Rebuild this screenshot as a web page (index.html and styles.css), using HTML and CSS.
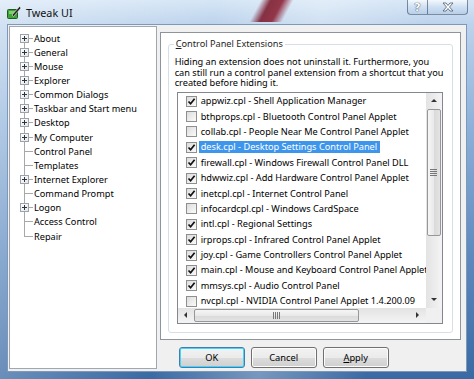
FILE: index.html
```html
<!DOCTYPE html>
<html>
  <head>
    <title>Tweak UI</title>
    <link rel="stylesheet" href="styles.css">
  </head>
  <body>
    <div class="window">
      <div class="titlebar">
        <svg class="app-icon" width="16" height="16" viewBox="0 0 16 16">
          <rect x="1.5" y="5.5" width="10" height="9" rx="1" fill="#3fa33a" stroke="#1d5e1e"/>
          <rect x="3" y="7" width="7" height="3" fill="#7fd06a"/>
          <path d="M6 11 L13.5 2.5 L15 4 L7.5 12.5 Z" fill="#222" stroke="#eee" stroke-width="0.6"/>
        </svg>
        <span class="title">Tweak UI</span>
        <div class="caption-buttons">
          <div class="cap-btn help">?</div>
          <div class="cap-btn close">
            <svg width="12" height="10" viewBox="0 0 12 10">
              <path d="M1 1 L4 1 L6 3.5 L8 1 L11 1 L7.5 5 L11 9 L8 9 L6 6.5 L4 9 L1 9 L4.5 5 Z" fill="#fff" stroke="#4a5a70" stroke-width="0.8"/>
            </svg>
          </div>
        </div>
      </div>

      <div class="client">
        <div class="tree">
          <div class="node first"><span class="twig"><span class="plus"></span></span><span class="label">About</span></div>
          <div class="node"><span class="twig"><span class="plus"></span></span><span class="label">General</span></div>
          <div class="node"><span class="twig"><span class="plus"></span></span><span class="label">Mouse</span></div>
          <div class="node"><span class="twig"><span class="plus"></span></span><span class="label">Explorer</span></div>
          <div class="node"><span class="twig"><span class="plus"></span></span><span class="label">Common Dialogs</span></div>
          <div class="node"><span class="twig"><span class="plus"></span></span><span class="label">Taskbar and Start menu</span></div>
          <div class="node"><span class="twig"><span class="plus"></span></span><span class="label">Desktop</span></div>
          <div class="node"><span class="twig"><span class="plus"></span></span><span class="label">My Computer</span></div>
          <div class="node"><span class="twig"></span><span class="label">Control Panel</span></div>
          <div class="node"><span class="twig"></span><span class="label">Templates</span></div>
          <div class="node"><span class="twig"><span class="plus"></span></span><span class="label">Internet Explorer</span></div>
          <div class="node"><span class="twig"></span><span class="label">Command Prompt</span></div>
          <div class="node"><span class="twig"><span class="plus"></span></span><span class="label">Logon</span></div>
          <div class="node"><span class="twig"></span><span class="label">Access Control</span></div>
          <div class="node last"><span class="twig"></span><span class="label">Repair</span></div>
        </div>

        <div class="main">
          <div class="page">
            <fieldset class="group">
              <legend><u>C</u>ontrol Panel Extensions</legend>
              <p class="desc">Hiding an extension does not uninstall it. Furthermore, you can still run a control panel extension from a shortcut that you created before hiding it.</p>
              <div class="listbox">
                <div class="rows">
                  <div class="row"><span class="check on"></span><span class="item">appwiz.cpl - Shell Application Manager</span></div>
                  <div class="row"><span class="check"></span><span class="item">bthprops.cpl - Bluetooth Control Panel Applet</span></div>
                  <div class="row"><span class="check"></span><span class="item">collab.cpl - People Near Me Control Panel Applet</span></div>
                  <div class="row"><span class="check on"></span><span class="item selected">desk.cpl - Desktop Settings Control Panel</span></div>
                  <div class="row"><span class="check on"></span><span class="item">firewall.cpl - Windows Firewall Control Panel DLL</span></div>
                  <div class="row"><span class="check on"></span><span class="item">hdwwiz.cpl - Add Hardware Control Panel Applet</span></div>
                  <div class="row"><span class="check on"></span><span class="item">inetcpl.cpl - Internet Control Panel</span></div>
                  <div class="row"><span class="check"></span><span class="item">infocardcpl.cpl - Windows CardSpace</span></div>
                  <div class="row"><span class="check on"></span><span class="item">intl.cpl - Regional Settings</span></div>
                  <div class="row"><span class="check on"></span><span class="item">irprops.cpl - Infrared Control Panel Applet</span></div>
                  <div class="row"><span class="check on"></span><span class="item">joy.cpl - Game Controllers Control Panel Applet</span></div>
                  <div class="row"><span class="check on"></span><span class="item">main.cpl - Mouse and Keyboard Control Panel Applets</span></div>
                  <div class="row"><span class="check on"></span><span class="item">mmsys.cpl - Audio Control Panel</span></div>
                  <div class="row"><span class="check"></span><span class="item">nvcpl.cpl - NVIDIA Control Panel Applet 1.4.200.09</span></div>
                  <div class="row"><span class="check"></span></div>
                </div>
                <div class="vscroll">
                  <div class="arrow"><span class="tri up"></span></div>
                  <div class="thumb v"><span class="grip-v"></span></div>
                  <div class="track"></div>
                  <div class="arrow"><span class="tri down"></span></div>
                </div>
                <div class="hscroll">
                  <div class="arrow"><span class="tri left"></span></div>
                  <div class="thumb h"><span class="grip-h"></span></div>
                  <div class="track"></div>
                  <div class="arrow"><span class="tri right"></span></div>
                </div>
                <div class="corner"></div>
              </div>
            </fieldset>
          </div>

          <div class="buttons">
            <button class="btn default">OK</button>
            <button class="btn">Cancel</button>
            <button class="btn"><u>A</u>pply</button>
          </div>
        </div>
      </div>
    </div>
  </body>
</html>
```

FILE: styles.css
```css
* {
  box-sizing: border-box;
}

body {
  margin: 0;
  font-family: "Noto Sans", "Open Sans", sans-serif;
  font-size: 9.2px;
  color: #000;
}

.window {
  width: 474px;
  height: 379px;
  display: flex;
  flex-direction: column;
  padding: 0 7px 7px 7px;
  background:
    linear-gradient(118deg, rgba(125, 30, 48, 0) 25%, rgba(125, 30, 48, 0.9) 42%, rgba(140, 35, 55, 0.9) 62%, rgba(125, 30, 48, 0) 80%) 246px 0 / 48px 22px no-repeat,
    linear-gradient(100deg, rgba(255, 255, 255, 0.35) 0, rgba(255, 255, 255, 0) 40%, rgba(255, 255, 255, 0.3) 60%, rgba(255, 255, 255, 0) 80%),
    linear-gradient(to bottom, #d6e6f6 0, #bcd3ec 24px, #8fb3da 120px, #5c88bd 260px, #3a6aa3 379px);
}

/* title bar */
.titlebar {
  height: 24px;
  display: flex;
  align-items: center;
}

.app-icon {
  margin-left: -1px;
}

.title {
  margin-left: 4px;
  font-size: 10.8px;
  color: #111;
}

.caption-buttons {
  margin-left: auto;
  margin-right: -1px;
  align-self: flex-start;
  display: flex;
}

.cap-btn {
  height: 15px;
  display: flex;
  align-items: center;
  justify-content: center;
  border: 1px solid rgba(50, 70, 100, 0.6);
  border-top: none;
  background: linear-gradient(to bottom, rgba(255, 255, 255, 0.7), rgba(205, 222, 240, 0.5) 50%, rgba(170, 195, 225, 0.5));
}

.help {
  width: 21px;
  border-radius: 0 0 0 4px;
  color: #fff;
  font-family: "DejaVu Sans", sans-serif;
  font-weight: bold;
  font-size: 11px;
  text-shadow: 0 0 1px #3c4c60, 0 0 1px #3c4c60;
}

.close {
  width: 40px;
  border-left: none;
  border-radius: 0 0 4px 0;
}

/* client area */
.client {
  flex: 1;
  display: flex;
  gap: 3px;
  padding: 1px 2px 2px 1px;
  background: #f0f0f0;
  border: 1px solid #7d98b8;
}

.tree {
  width: 148px;
  padding: 4px 0 0 10px;
  background: #fff;
  border: 1px solid #a0a7b0;
}

.node {
  height: 14.15px;
  display: flex;
  align-items: center;
}

.twig {
  width: 13px;
  height: 100%;
  display: flex;
  align-items: center;
  background:
    linear-gradient(#a8a8a8, #a8a8a8) 4px 0 / 1px 100% no-repeat,
    linear-gradient(#a8a8a8, #a8a8a8) 4px 50% / 9px 1px no-repeat;
}

.node.first .twig {
  background:
    linear-gradient(#a8a8a8, #a8a8a8) 4px 100% / 1px 50% no-repeat,
    linear-gradient(#a8a8a8, #a8a8a8) 4px 50% / 9px 1px no-repeat;
}

.node.last .twig {
  background:
    linear-gradient(#a8a8a8, #a8a8a8) 4px 0 / 1px 50% no-repeat,
    linear-gradient(#a8a8a8, #a8a8a8) 4px 50% / 9px 1px no-repeat;
}

.plus {
  width: 9px;
  height: 9px;
  border: 1px solid #9aa3ad;
  background:
    linear-gradient(#333, #333) 50% 50% / 5px 1px no-repeat,
    linear-gradient(#333, #333) 50% 50% / 1px 5px no-repeat,
    linear-gradient(135deg, #ffffff, #e3e6ea);
}

.label {
  margin-left: 1px;
  white-space: nowrap;
}

/* right side */
.main {
  width: 305px;
  display: flex;
  flex-direction: column;
}

.page {
  width: 301px;
  height: 308px;
  margin-top: 6px;
  background: #fff;
  border: 1px solid #8d949c;
  padding-top: 5px;
}

.group {
  margin: 0 7px 0 7px;
  padding: 0 0 8px 6px;
  border: 1px solid #d5dfe5;
  border-radius: 3px;
}

.group legend {
  margin-left: -1px;
  padding: 0 2px;
  line-height: 12px;
  color: #1e1e1e;
}

.desc {
  margin: 7px 0 0 0;
  line-height: 10.5px;
  padding-right: 6px;
}

.listbox {
  width: 266px;
  height: 232px;
  margin: 3px 0 0 2px;
  background: #fff;
  border: 1px solid #828790;
  display: grid;
  grid-template-columns: 1fr 16px;
  grid-template-rows: 1fr 15px;
  overflow: hidden;
}

.rows {
  padding-top: 1px;
  overflow: hidden;
}

.row {
  height: 15.4px;
  display: flex;
  align-items: center;
  padding-left: 8px;
  white-space: nowrap;
}

.check {
  flex: none;
  width: 11px;
  height: 11px;
  margin-right: 2px;
  border: 1px solid #8e8f8f;
  background: linear-gradient(135deg, #dcdcdc, #fbfbfb);
}

.check.on {
  background:
    url("data:image/svg+xml,%3Csvg xmlns='http://www.w3.org/2000/svg' width='9' height='9'%3E%3Cpath d='M1.5 4.5 L3.6 6.8 L7.6 1.8' fill='none' stroke='%23111' stroke-width='1.7'/%3E%3C/svg%3E") center / 9px 9px no-repeat,
    linear-gradient(135deg, #dcdcdc, #fbfbfb);
}

.item {
  padding: 0 3px 0 2px;
  line-height: 12px;
}

.item.selected {
  background: #3d95ec;
  color: #fff;
}

/* scrollbars */
.vscroll {
  display: flex;
  flex-direction: column;
  background: linear-gradient(to right, #e3e3e3, #f4f4f4);
}

.hscroll {
  display: flex;
  background: linear-gradient(to bottom, #e3e3e3, #f4f4f4);
}

.corner {
  background: #f0f0f0;
}

.arrow {
  flex: none;
  width: 16px;
  height: 15px;
  display: flex;
  align-items: center;
  justify-content: center;
}

.vscroll .arrow {
  height: 16px;
}

.track {
  flex: 1;
}

.tri {
  width: 0;
  height: 0;
  border: 3px solid transparent;
}

.tri.up {
  border-bottom: 3px solid #333;
  border-top-width: 0;
}

.tri.down {
  border-top: 3px solid #333;
  border-bottom-width: 0;
}

.tri.left {
  border-right: 3px solid #333;
  border-left-width: 0;
}

.tri.right {
  border-left: 3px solid #333;
  border-right-width: 0;
}

.thumb {
  display: flex;
  align-items: center;
  justify-content: center;
  border: 1px solid #979797;
  border-radius: 2px;
}

.thumb.v {
  height: 127px;
  margin: 0 1px;
  background: linear-gradient(to right, #f6f6f6, #e9e9e9 50%, #d9d9d9 50%, #e4e4e4);
}

.thumb.h {
  width: 165px;
  margin: 1px 0;
  background: linear-gradient(to bottom, #f6f6f6, #e9e9e9 50%, #d9d9d9 50%, #e4e4e4);
}

.grip-v {
  width: 7px;
  height: 7px;
  background: repeating-linear-gradient(to bottom, #777 0 1px, transparent 1px 2px);
}

.grip-h {
  width: 7px;
  height: 7px;
  background: repeating-linear-gradient(to right, #777 0 1px, transparent 1px 2px);
}

/* dialog buttons */
.buttons {
  display: flex;
  gap: 6px;
  margin-top: 7px;
  padding-left: 19px;
}

.btn {
  width: 66px;
  height: 21px;
  padding: 0;
  font-family: inherit;
  font-size: 9.3px;
  color: #000;
  border: 1px solid #707070;
  border-radius: 3px;
  background: linear-gradient(to bottom, #f2f2f2 0, #ebebeb 50%, #dddddd 50%, #cfcfcf 100%);
  box-shadow: inset 0 0 0 1px #fcfcfc;
}

.btn.default {
  border-color: #3c7fb1;
  box-shadow: inset 0 0 0 1px #48d4f6;
}
```
